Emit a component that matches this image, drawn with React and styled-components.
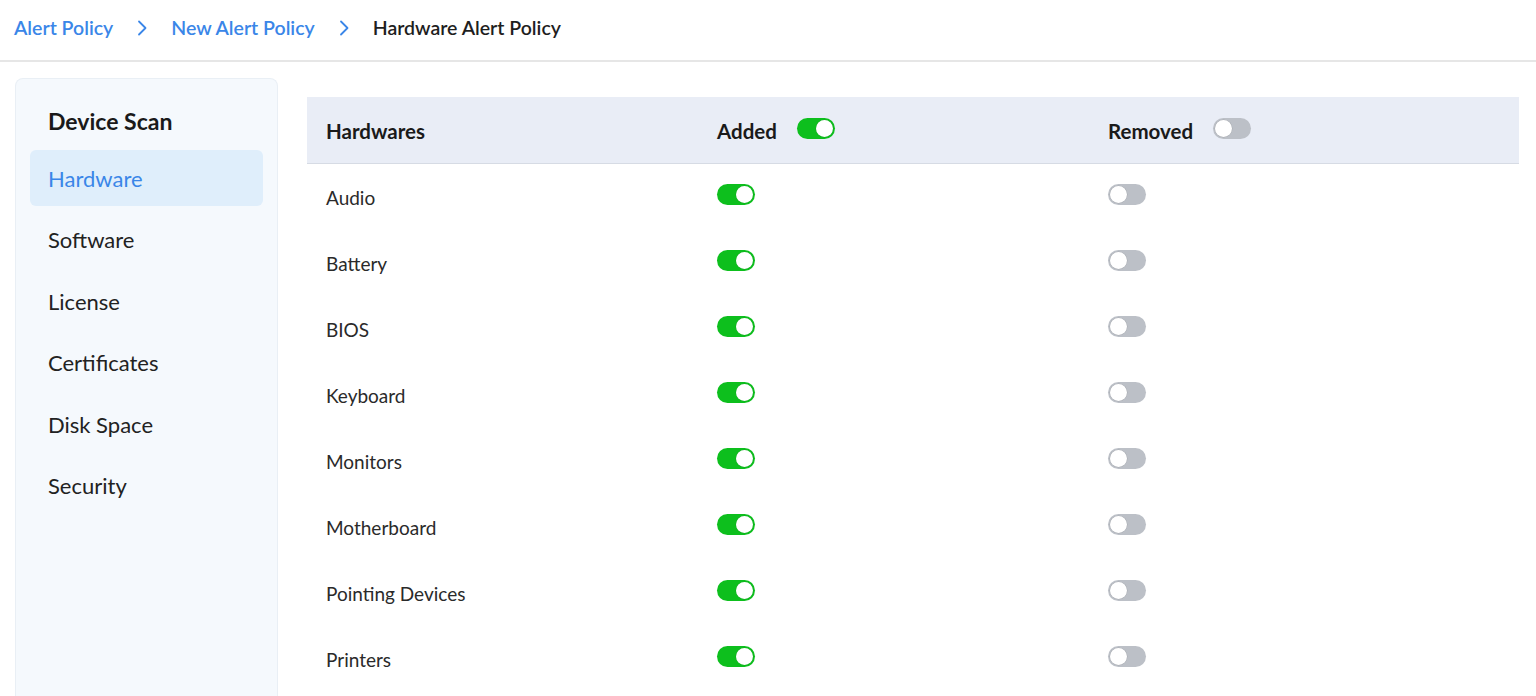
import React from "react";
import styled, { createGlobalStyle } from "styled-components";

const Global = createGlobalStyle`
  html, body { margin: 0; padding: 0; background: #ffffff; }
  body { font-family: Lato, "Noto Sans", sans-serif; color: #1f1f1f; }
  * { box-sizing: border-box; }
`;

const Page = styled.div`
  width: 1536px;
  height: 696px;
  overflow: hidden;
  display: flex;
  flex-direction: column;
`;

const Breadcrumb = styled.nav`
  height: 62px;
  flex: none;
  display: flex;
  align-items: center;
  padding: 0 0 5px 14px;
  border-bottom: 2px solid #e6e6e6;
  gap: 23px;
`;

const Crumb = styled.span`
  font-size: 19.5px;
  font-weight: 600;
  color: ${(p) => (p.$current ? "#1e1e1e" : "#3a86e8")};
`;

const Chevron = styled.svg`
  width: 12px;
  height: 18px;
  color: #3a86e8;
`;

const Body = styled.div`
  flex: 1;
  display: flex;
  padding: 16px 17px 0 15px;
  gap: 29px;
  min-height: 0;
`;

const Sidebar = styled.aside`
  width: 263px;
  flex: none;
  background: #f5f9fd;
  border: 1px solid #e9eff5;
  border-bottom: none;
  border-radius: 8px 8px 0 0;
  padding: 26px 14px 0 14px;
  display: flex;
  flex-direction: column;
`;

const SideTitle = styled.h2`
  margin: 0 0 13px 18px;
  font-size: 23px;
  font-weight: 700;
  color: #1a1a1a;
  line-height: 32px;
`;

const SideItem = styled.div`
  height: 56px;
  margin-bottom: 5.5px;
  display: flex;
  align-items: center;
  padding-left: 18px;
  border-radius: 6px;
  font-size: 22px;
  color: ${(p) => (p.$active ? "#3a86e8" : "#222222")};
  background: ${(p) => (p.$active ? "#dfeefb" : "transparent")};
`;

const Main = styled.main`
  flex: 1;
  padding-top: 19px;
`;

const Table = styled.div`
  display: flex;
  flex-direction: column;
`;

const HeaderRow = styled.div`
  display: grid;
  grid-template-columns: 391px 391px 1fr;
  height: 67px;
  padding-left: 19px;
  align-items: center;
  background: #e9edf6;
  border-bottom: 1px solid #d6dbe4;
`;

const HeadCell = styled.div`
  display: flex;
  align-items: center;
  gap: 20px;
  font-size: 20.5px;
  font-weight: 700;
  color: #1a1a1a;
  padding-top: 2px;
`;

const Row = styled.div`
  display: grid;
  grid-template-columns: 391px 391px 1fr;
  height: 66px;
  padding-left: 19px;
  align-items: center;
`;

const Cell = styled.div`
  display: flex;
  align-items: center;
  font-size: 19px;
  color: #2a2a2a;
  padding-top: ${(p) => (p.$text ? "0" : "0")};
  margin-top: ${(p) => (p.$toggle ? "-6px" : "0")};
`;

const Track = styled.span`
  position: relative;
  display: inline-block;
  width: 38px;
  height: 21px;
  border-radius: 11px;
  background: ${(p) => (p.$on ? "#0dbf1d" : "#bcc0c7")};
  margin-top: ${(p) => (p.$lift ? "-6px" : "0")};
`;

const Knob = styled.span`
  position: absolute;
  top: 2px;
  left: ${(p) => (p.$on ? "19px" : "2px")};
  width: 17px;
  height: 17px;
  border-radius: 50%;
  background: #ffffff;
  box-shadow: 0 0 0 0.5px rgba(0, 0, 0, 0.12);
`;

const Toggle = ({ on, lift }) => (
  <Track $on={on} $lift={lift}>
    <Knob $on={on} />
  </Track>
);

const ChevronIcon = () => (
  <Chevron viewBox="0 0 12 18" fill="none">
    <path d="M3 2.5 L9.5 9 L3 15.5" stroke="currentColor" strokeWidth="1.8" strokeLinecap="round" strokeLinejoin="round" />
  </Chevron>
);

const sideItems = ["Hardware", "Software", "License", "Certificates", "Disk Space", "Security"];
const rows = ["Audio", "Battery", "BIOS", "Keyboard", "Monitors", "Motherboard", "Pointing Devices", "Printers"];

export default function App() {
  return (
    <>
      <Global />
      <Page>
        <Breadcrumb>
          <Crumb>Alert Policy</Crumb>
          <ChevronIcon />
          <Crumb>New Alert Policy</Crumb>
          <ChevronIcon />
          <Crumb $current>Hardware Alert Policy</Crumb>
        </Breadcrumb>
        <Body>
          <Sidebar>
            <SideTitle>Device Scan</SideTitle>
            {sideItems.map((s, i) => (
              <SideItem key={s} $active={i === 0}>{s}</SideItem>
            ))}
          </Sidebar>
          <Main>
            <Table>
              <HeaderRow>
                <HeadCell>Hardwares</HeadCell>
                <HeadCell>Added <Toggle on lift /></HeadCell>
                <HeadCell>Removed <Toggle lift /></HeadCell>
              </HeaderRow>
              {rows.map((r) => (
                <Row key={r}>
                  <Cell $text>{r}</Cell>
                  <Cell $toggle><Toggle on /></Cell>
                  <Cell $toggle><Toggle /></Cell>
                </Row>
              ))}
            </Table>
          </Main>
        </Body>
      </Page>
    </>
  );
}
